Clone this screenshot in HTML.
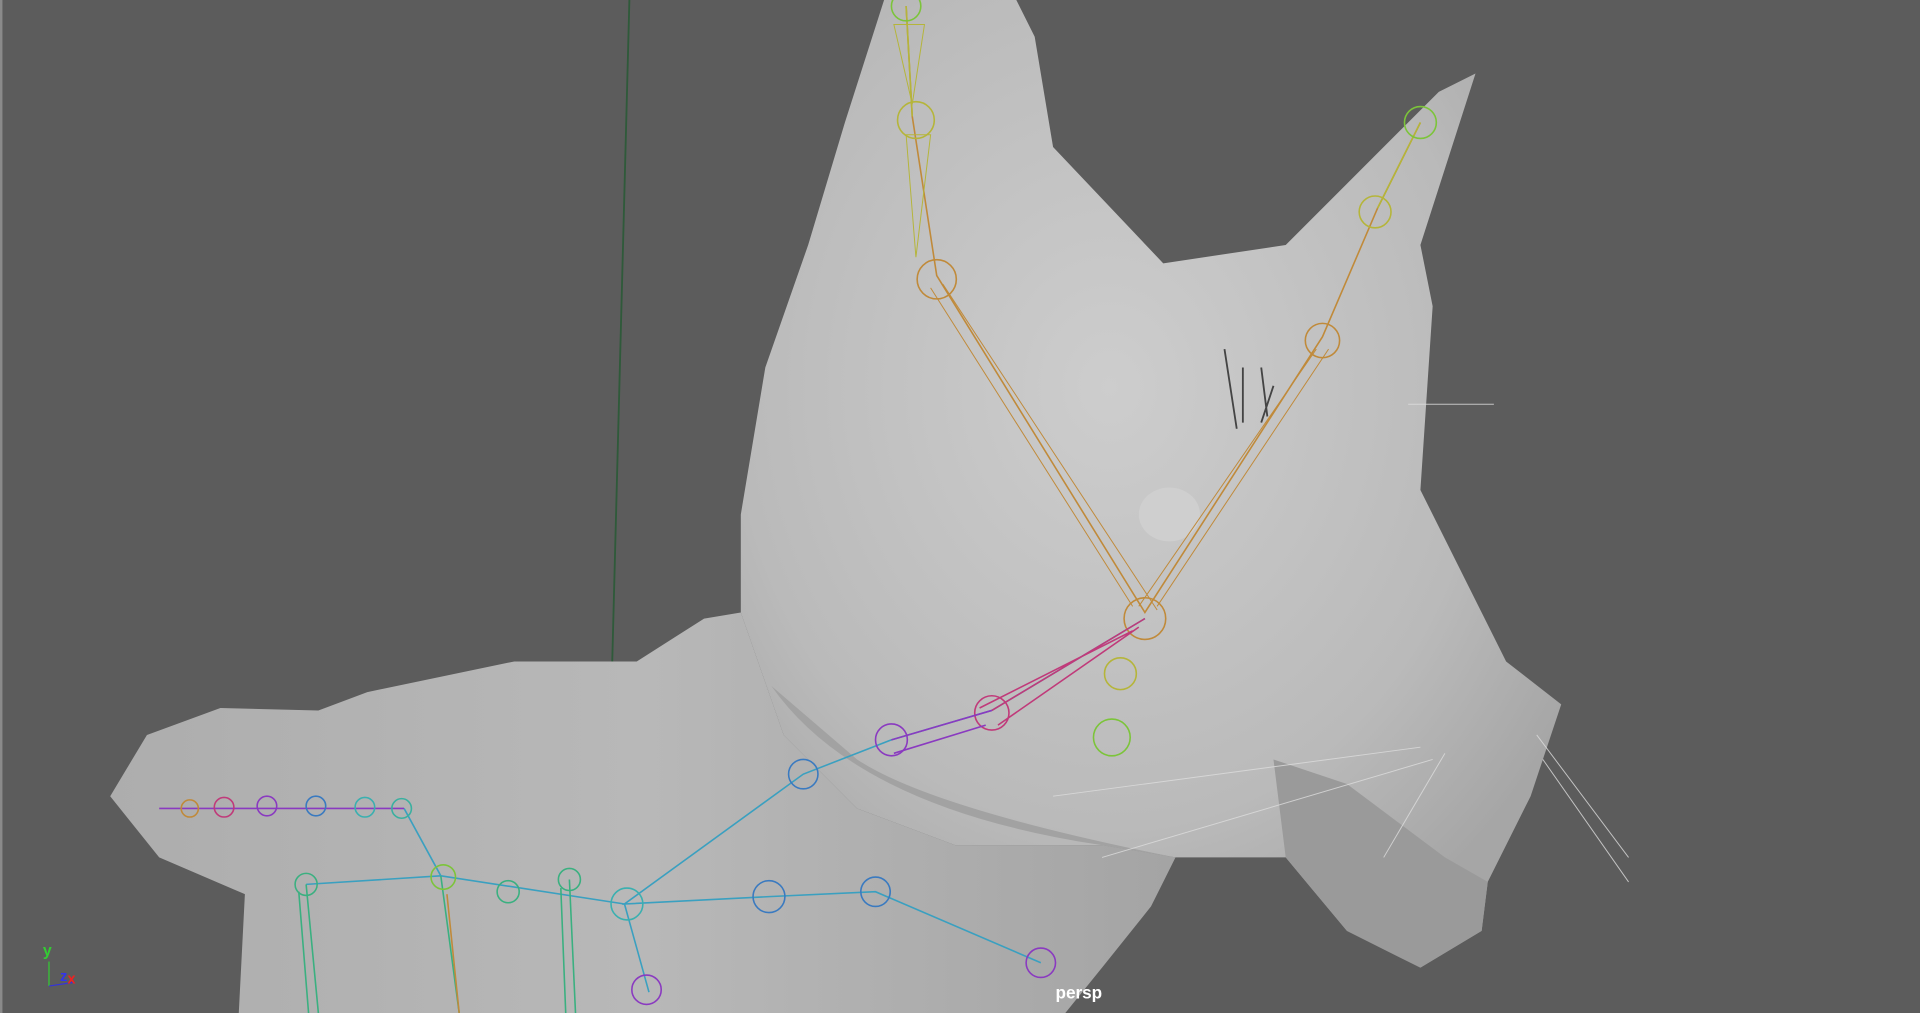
<!DOCTYPE html>
<html><head><style>
html,body{margin:0;padding:0;width:1920px;height:1013px;overflow:hidden;background:#5c5c5c}
svg{display:block}
</style></head><body>
<svg width="1920" height="1013" viewBox="0 0 1568 827" preserveAspectRatio="none" xmlns="http://www.w3.org/2000/svg">
<defs>
<radialGradient id="g1" cx="0.45" cy="0.4" r="0.65">
<stop offset="0" stop-color="#cdcdcd"/><stop offset="0.7" stop-color="#bababa"/><stop offset="1" stop-color="#a6a6a6"/>
</radialGradient>
<linearGradient id="g2" x1="0" y1="0" x2="1" y2="0">
<stop offset="0" stop-color="#adadad"/><stop offset="0.5" stop-color="#b8b8b8"/><stop offset="1" stop-color="#a4a4a4"/>
</linearGradient>
</defs>
<rect width="1568" height="827" fill="#5c5c5c"/>
<line x1="1" y1="0" x2="1" y2="827" stroke="#8a8a8a" stroke-width="2"/>
<line x1="514" y1="0" x2="500" y2="540" stroke="#2f5a3a" stroke-width="1.5"/>
<path d="M605,500 L575,505 L520,540 L420,540 L300,565 L260,580 L180,578 L120,600 L90,650 L130,700 L200,730 L195,827 L870,827 L900,790 L940,740 L960,700 L900,690 L780,690 L700,660 L640,600 Z" fill="url(#g2)"/>
<path d="M722,0 L690,100 L660,200 L625,300 L605,420 L605,500 L640,600 L700,660 L780,690 L900,690 L960,700 L1050,700 L1100,760 L1160,790 L1210,760 L1215,720 L1250,650 L1275,575 L1230,540 L1200,480 L1160,400 L1170,250 L1160,200 L1205,60 L1175,75 L1100,150 L1050,200 L950,215 L860,120 L845,30 L830,0 Z" fill="url(#g1)"/>
<path d="M1050,700 L1100,760 L1160,790 L1210,760 L1215,720 L1180,700 L1100,640 L1040,620 Z" fill="#9a9a9a"/>
<path d="M630,560 Q700,660 900,690 L960,700 Q760,660 700,620 Z" fill="#a2a2a2"/>
<ellipse cx="955" cy="420" rx="25" ry="22" fill="#cfcfcf"/>
<g fill="none" stroke-width="1.3">
<path d="M740,5 L745,95 L765,225 L935,500 L1080,275 L1125,170 L1160,100" stroke="#c08a3a"/>
<path d="M760,235 L925,495 M770,232 L945,498 M1075,285 L930,495 M1085,285 L945,495" stroke="#c08a3a" stroke-width="0.8"/>
<path d="M730,20 L745,85 L755,20 Z M740,110 L748,210 L760,110 Z" stroke="#b5b53a" stroke-width="0.8"/>
<path d="M740,5 L745,95 M1125,170 L1160,100" stroke="#b5b53a"/>
<circle cx="748" cy="98" r="15" stroke="#b5b53a"/><circle cx="740" cy="5" r="12" stroke="#7cc43a"/>
<circle cx="765" cy="228" r="16" stroke="#c08a3a"/><circle cx="1080" cy="278" r="14" stroke="#c08a3a"/>
<circle cx="1123" cy="173" r="13" stroke="#b5b53a"/><circle cx="1160" cy="100" r="13" stroke="#7cc43a"/>
<circle cx="935" cy="505" r="17" stroke="#c08a3a"/>
<circle cx="915" cy="550" r="13" stroke="#b5b53a"/><circle cx="908" cy="602" r="15" stroke="#7cc43a"/>
<path d="M935,505 L810,580 L728,604 L656,632 L510,738 L628,732 L715,728 L850,786 M510,738 L530,810 M510,738 L360,715 L250,722 M360,715 L330,660" stroke="#3aa0c0"/>
<path d="M935,505 L810,580 M930,512 L815,592 M925,515 L800,578" stroke="#c03a7a"/><circle cx="810" cy="582" r="14" stroke="#c03a7a"/>
<path d="M810,580 L728,604 M805,592 L730,615" stroke="#8a3ac0"/><circle cx="728" cy="604" r="13" stroke="#8a3ac0"/>
<circle cx="656" cy="632" r="12" stroke="#3a7ac0"/><circle cx="512" cy="738" r="13" stroke="#3ab0b0"/>
<circle cx="628" cy="732" r="13" stroke="#3a7ac0"/><circle cx="715" cy="728" r="12" stroke="#3a7ac0"/>
<circle cx="850" cy="786" r="12" stroke="#8a3ac0"/><circle cx="528" cy="808" r="12" stroke="#8a3ac0"/>
<path d="M130,660 L330,660" stroke="#8a3ac0"/>
<circle cx="155" cy="660" r="7" stroke="#c08a3a"/><circle cx="183" cy="659" r="8" stroke="#c03a7a"/>
<circle cx="218" cy="658" r="8" stroke="#8a3ac0"/><circle cx="258" cy="658" r="8" stroke="#3a7ac0"/>
<circle cx="298" cy="659" r="8" stroke="#3ab0b0"/><circle cx="328" cy="660" r="8" stroke="#3ab0a0"/>
<path d="M250,722 L260,827 M465,718 L470,827 M360,715 L375,827 M244,728 L252,827 M458,725 L462,827" stroke="#3ab080"/>
<circle cx="250" cy="722" r="9" stroke="#3ab080"/><circle cx="465" cy="718" r="9" stroke="#3ab080"/>
<circle cx="415" cy="728" r="9" stroke="#3ab080"/><circle cx="362" cy="716" r="10" stroke="#7cc43a"/>
<path d="M365,730 L375,827" stroke="#c08a3a"/>
</g>
<g stroke="#444" stroke-width="1.5" fill="none"><path d="M1000,285 L1010,350 M1015,300 L1015,345 M1030,300 L1035,340 M1040,315 L1030,345"/></g>
<g stroke="#ddd" stroke-width="0.8" fill="none" opacity="0.8"><path d="M1160,610 L860,650 M1170,620 L900,700 M1180,615 L1130,700 M1255,600 L1330,700 M1260,620 L1330,720 M1150,330 L1220,330"/></g>
<text x="862" y="815" font-family="Liberation Sans, sans-serif" font-weight="bold" font-size="14" fill="#fff">persp</text>
<line x1="40" y1="785" x2="40" y2="805" stroke="#3c3" stroke-width="1"/>
<line x1="40" y1="805" x2="60" y2="802" stroke="#33d" stroke-width="1"/>
<text x="35" y="780" font-family="Liberation Sans, sans-serif" font-weight="bold" font-size="13" fill="#3c3">y</text>
<text x="49" y="801" font-family="Liberation Sans, sans-serif" font-weight="bold" font-size="12" fill="#33e">z</text>
<text x="55" y="803" font-family="Liberation Sans, sans-serif" font-weight="bold" font-size="12" fill="#e22">x</text>
</svg>
</body></html>
